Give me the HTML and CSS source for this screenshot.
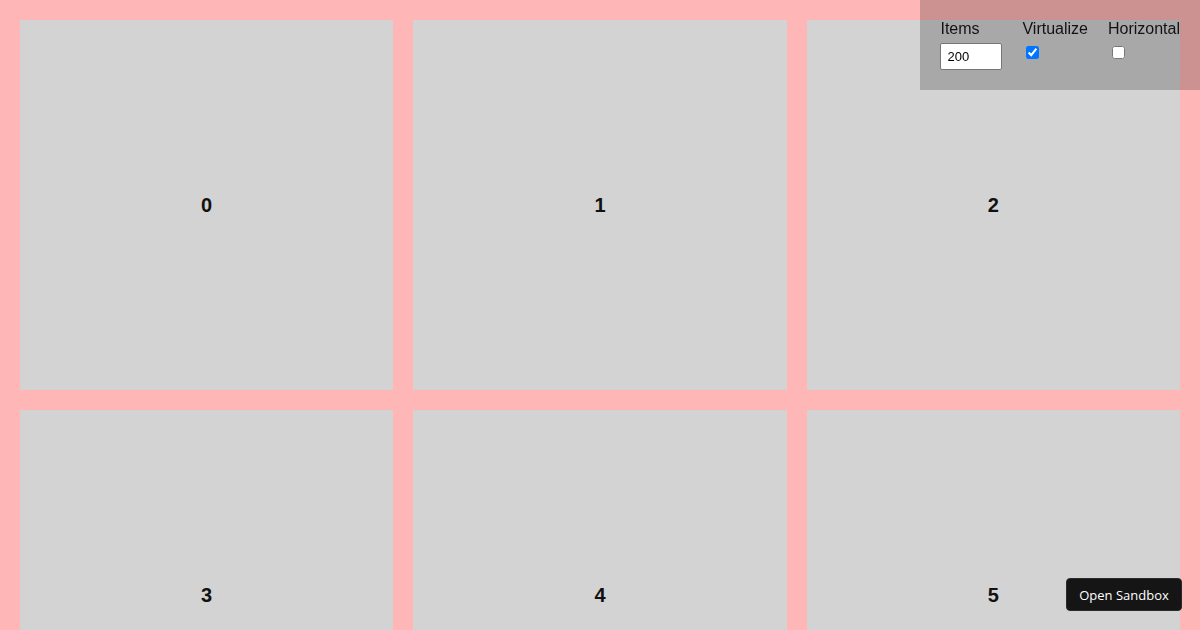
FILE: index.html
```html
<!DOCTYPE html>
<html>
<head>
<meta charset="utf-8">
<link rel="stylesheet" href="styles.css">
</head>
<body>
<div class="grid">
  <div class="cell">0</div>
  <div class="cell">1</div>
  <div class="cell">2</div>
  <div class="cell">3</div>
  <div class="cell">4</div>
  <div class="cell">5</div>
</div>
<div class="controls">
  <label class="field">Items<input class="num" type="text" value="200"></label>
  <label class="field">Virtualize<span class="row"><input type="checkbox" checked></span></label>
  <label class="field">Horizontal<span class="row"><input type="checkbox"></span></label>
</div>
<button class="sandbox">Open Sandbox</button>
</body>
</html>
```
FILE: styles.css
```css
html, body {
  margin: 0;
  padding: 0;
  height: 100%;
  overflow: hidden;
}
body {
  background: rgb(255, 182, 182);
  font-family: "Liberation Sans", Arial, sans-serif;
}
.grid {
  display: grid;
  grid-template-columns: repeat(3, 1fr);
  grid-auto-rows: 370px;
  gap: 20px;
  padding: 20px;
}
.cell {
  background: #d3d3d3;
  display: flex;
  align-items: center;
  justify-content: center;
  font-weight: bold;
  font-size: 20px;
  color: #111;
}
.controls {
  position: fixed;
  top: 0;
  right: 0;
  display: flex;
  gap: 20px;
  padding: 20px;
  background: rgba(0, 0, 0, 0.2);
  font-size: 16px;
  color: #111;
}
.field {
  display: flex;
  flex-direction: column;
  align-items: flex-start;
  gap: 5px;
  line-height: 18px;
}
.row {
  display: block;
  height: 27px;
}
.row input {
  margin: 3px 3px 3px 4px;
  width: 13px;
  height: 13px;
}
.num {
  box-sizing: border-box;
  width: 62px;
  height: 27px;
  margin: 0;
  padding: 0 6px;
  border: 1px solid #767676;
  border-radius: 2px;
  background: #fff;
  font-family: "Liberation Sans", Arial, sans-serif;
  font-size: 13px;
  color: #000;
}
.sandbox {
  position: fixed;
  right: 18px;
  bottom: 19px;
  width: 116px;
  height: 33px;
  background: #151515;
  color: #fff;
  border: 1px solid #2a2a2a;
  border-radius: 4px;
  font-family: "Open Sans", sans-serif;
  font-size: 13px;
  font-weight: 500;
  padding: 0;
}
```
